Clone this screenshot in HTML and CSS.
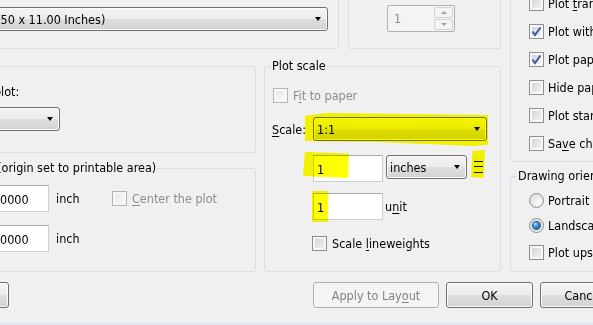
FILE: index.html
```html
<!DOCTYPE html>
<html lang="en">
<head>
    <meta charset="UTF-8">
    <title>Plot - Layout1</title>
    <link rel="stylesheet" href="styles.css">
</head>
<body>

<div class="dialog">
    <div class="main">
        <div class="row-top">
            <fieldset class="group paper">
                <legend>Paper size</legend>
                <div class="combo combo-paper"><span>ANSI A (8.50 x 11.00 Inches)</span><i class="arrow"></i></div>
            </fieldset>
            <fieldset class="group copies">
                <legend>Number of copies</legend>
                <div class="spin">
                    <span>1</span>
                    <div class="spin-btns"><b class="up"></b><b class="down"></b></div>
                </div>
            </fieldset>
        </div>

        <div class="row-mid">
            <div class="col-left">
                <fieldset class="group area">
                    <legend>Plot area</legend>
                    <div class="label">What to plot:</div>
                    <div class="combo combo-what"><span>Layout</span><i class="arrow"></i></div>
                </fieldset>
                <fieldset class="group offset">
                    <legend>Plot offset (origin set to printable area)</legend>
                    <div class="offset-row first">
                        <span class="axis">X:</span>
                        <div class="field offset-field">0.000000</div>
                        <span class="unit">inch</span>
                        <div class="check disabled"><span class="box"></span><span><u>C</u>enter the plot</span></div>
                    </div>
                    <div class="offset-row">
                        <span class="axis">Y:</span>
                        <div class="field offset-field">0.000000</div>
                        <span class="unit">inch</span>
                    </div>
                </fieldset>
            </div>

            <fieldset class="group scale">
                <legend>Plot scale</legend>
                <div class="check disabled fit"><span class="box"></span><span>F<u>i</u>t to paper</span></div>
                <div class="scale-row">
                    <span class="scale-label"><u>S</u>cale:</span>
                    <div class="combo combo-scale"><span>1:1</span><i class="arrow"></i></div>
                    <span class="mark mark-scale"></span>
                </div>
                <div class="units-row">
                    <div class="field scale-field">1</div>
                    <div class="combo combo-units"><span>inches</span><i class="arrow"></i></div>
                    <svg class="eq" width="9" height="12" viewBox="0 0 9 12">
                        <path d="M0 0.5H9M0 5.5H9M0 11.5H9" stroke="#1a1a1a" stroke-width="1"/>
                    </svg>
                    <span class="mark mark-one"></span>
                    <span class="mark mark-eq"></span>
                </div>
                <div class="units-row unit-row">
                    <div class="field scale-field">1</div>
                    <span class="unit-label">u<u>n</u>it</span>
                    <span class="mark mark-two"></span>
                </div>
                <div class="check lineweights"><span class="box"></span><span>Scale <u>l</u>ineweights</span></div>
            </fieldset>
        </div>
    </div>

    <div class="side">
        <fieldset class="group options">
            <legend>Plot options</legend>
            <div class="check opt first"><span class="box"></span><span>Plot <u>t</u>ransparency</span></div>
            <div class="check opt"><span class="box"><svg width="13" height="13" viewBox="0 0 13 13"><path d="M2.5 6.5 L5 10 L10.5 2.5" fill="none" stroke="#3f5aa0" stroke-width="2"/></svg></span><span>Plot with plot st<u>y</u>les</span></div>
            <div class="check opt"><span class="box"><svg width="13" height="13" viewBox="0 0 13 13"><path d="M2.5 6.5 L5 10 L10.5 2.5" fill="none" stroke="#3f5aa0" stroke-width="2"/></svg></span><span>Plot paperspace last</span></div>
            <div class="check opt"><span class="box"></span><span>Hide paperspace objects</span></div>
            <div class="check opt"><span class="box"></span><span>Plot stamp on</span></div>
            <div class="check opt"><span class="box"></span><span>Sa<u>v</u>e changes to layout</span></div>
        </fieldset>
        <fieldset class="group orient">
            <legend>Drawing orientation</legend>
            <div class="check portrait"><span class="radio"></span><span>Portrait</span></div>
            <div class="check landscape"><span class="radio on"></span><span>Landscape</span></div>
            <div class="check upside"><span class="box"></span><span>Plot upside-down</span></div>
        </fieldset>
    </div>
</div>

<div class="footer">
    <button class="btn btn-preview">Preview...</button>
    <button class="btn btn-apply" disabled>Apply to Lay<u>o</u>ut</button>
    <button class="btn btn-ok">OK</button>
    <button class="btn btn-cancel">Cancel</button>
</div>
<div class="frame-edge"></div>

</body>
</html>
```

FILE: styles.css
```css
body {
    margin: 0;
    width: 593px;
    height: 325px;
    overflow: hidden;
    background-color: #f0f0f0;
    font-family: "DejaVu Sans Condensed", "DejaVu Sans", sans-serif;
    font-stretch: condensed;
    font-size: 12.5px;
    color: #000;
}
u {
    text-decoration-thickness: 1px;
    text-underline-offset: 2px;
}
.dialog {
    display: flex;
    margin: -20px 0 0 -80px;
}
.main {
    width: 581px;
    flex: none;
    display: flex;
    flex-direction: column;
}
.side {
    width: 180px;
    flex: none;
    margin-left: 9px;
    display: flex;
    flex-direction: column;
}

/* group boxes */
.group {
    margin: 0;
    padding: 0 0 0 6px;
    border: 1px solid #d5dfe5;
    border-radius: 3px;
    box-sizing: border-box;
    min-width: 0;
}
.group legend {
    padding: 0 1px;
    line-height: 14px;
    white-space: nowrap;
}
.row-top {
    display: flex;
    gap: 9px;
}
.paper {
    width: 419px;
    height: 69px;
}
.copies {
    width: 153px;
    height: 69px;
}
.row-mid {
    display: flex;
    gap: 8px;
    margin-top: 10px;
}
.col-left {
    width: 336px;
    display: flex;
    flex-direction: column;
}
.area {
    height: 94px;
}
.offset {
    height: 111px;
    margin-top: 8px;
}
.offset legend {
    margin-left: 9px;
}
.scale {
    width: 237px;
    height: 213px;
}
.options {
    height: 182px;
}
.orient {
    height: 103px;
    margin-top: 7px;
}

/* combo boxes */
.combo {
    display: flex;
    align-items: center;
    justify-content: space-between;
    box-sizing: border-box;
    height: 24px;
    padding: 0 6px 0 3px;
    border: 1px solid #707070;
    border-radius: 3px;
    background: linear-gradient(#f3f3f3 0%, #ececec 48%, #dedede 52%, #d2d2d2 100%);
    box-shadow: inset 0 0 0 1px #fbfbfb;
    white-space: nowrap;
    flex: none;
}
.arrow {
    width: 0;
    height: 0;
    border-top: 4px solid #000;
    border-left: 3.5px solid transparent;
    border-right: 3.5px solid transparent;
}
.combo-paper {
    width: 388px;
    margin: 13px 0 0 13px;
}
.combo-what {
    width: 114px;
    margin: 8px 0 0 19px;
}
.combo-scale {
    width: 174px;
}
.combo-units {
    width: 81px;
    margin-left: 3px;
}

/* spinner */
.spin {
    display: flex;
    align-items: center;
    justify-content: space-between;
    box-sizing: border-box;
    width: 68px;
    height: 27px;
    margin: 11px 0 0 32px;
    padding: 0 0 0 6px;
    border: 1px solid #adb2b5;
    border-radius: 2px;
    background-color: #f4f4f4;
    color: #8d8d8d;
}
.spin-btns {
    display: flex;
    flex-direction: column;
    gap: 1px;
    width: 19px;
    height: 23px;
    margin-right: 1px;
}
.spin-btns b {
    flex: 1;
    display: flex;
    align-items: center;
    justify-content: center;
    border: 1px solid #cfd3d6;
    border-radius: 2px;
    background-color: #f4f4f4;
}
.spin-btns b::after {
    content: "";
    border-left: 3px solid transparent;
    border-right: 3px solid transparent;
}
.spin-btns .up::after {
    border-bottom: 3px solid #a2a2a2;
}
.spin-btns .down::after {
    border-top: 3px solid #a2a2a2;
}

/* text fields */
.field {
    box-sizing: border-box;
    height: 27px;
    padding: 6px 3px 0;
    border: 1px solid #c7d0da;
    border-top-color: #abadb3;
    background-color: #fff;
    white-space: nowrap;
    overflow: hidden;
    flex: none;
}
.label {
    line-height: 14px;
    margin: 12px 0 0 19px;
}

/* plot offset */
.offset-row {
    display: flex;
    align-items: center;
    margin: 13px 0 0 24px;
}
.offset-row.first {
    margin-top: 10px;
}
.axis {
    width: 20px;
}
.offset-field {
    width: 78px;
}
.unit {
    width: 63px;
    padding-left: 7px;
    box-sizing: border-box;
}

/* checkboxes and radios */
.check {
    display: flex;
    align-items: center;
    gap: 5px;
    line-height: 14px;
    white-space: nowrap;
}
.check.disabled {
    color: #8d8d8d;
}
.box {
    width: 15px;
    height: 15px;
    box-sizing: border-box;
    flex: none;
    border: 1px solid #8e8f8f;
    background: linear-gradient(135deg, #cdd0d4 0%, #f6f6f6 100%);
    box-shadow: inset 0 0 0 2px #f7f7f7;
}
.box svg {
    display: block;
}
.disabled .box {
    border-color: #b4b4b4;
    background: linear-gradient(135deg, #e6e6e6 0%, #fafafa 100%);
}
.radio {
    width: 15px;
    height: 15px;
    box-sizing: border-box;
    flex: none;
    display: flex;
    align-items: center;
    justify-content: center;
    border: 1px solid #8e8f8f;
    border-radius: 50%;
    background: radial-gradient(circle at 65% 65%, #fbfbfb 0%, #d3d5d8 100%);
}
.radio.on::after {
    content: "";
    width: 7px;
    height: 7px;
    border-radius: 50%;
    background: radial-gradient(circle at 35% 30%, #a8e2fb 0%, #2b86cc 45%, #0c3f78 100%);
    box-shadow: 0 0 0 1px #2a4f7d;
}

/* plot scale */
.fit {
    margin: 15px 0 0 2px;
}
.scale-row {
    position: relative;
    display: flex;
    align-items: center;
    margin: 14px 0 0 1px;
}
.scale-label {
    width: 41px;
}
.units-row {
    position: relative;
    display: flex;
    align-items: flex-start;
    margin: 14px 0 0 42px;
}
.scale-field {
    width: 70px;
}
.eq {
    margin: 6px 0 0 7px;
}
.unit-row {
    align-items: center;
    margin-top: 11px;
}
.unit-label {
    margin-left: 2px;
}
.lineweights {
    margin: 16px 0 0 41px;
}

/* highlighter marks */
.mark {
    position: absolute;
    background-color: #ffff00;
    mix-blend-mode: multiply;
}
.mark-scale {
    left: 33px;
    top: -4px;
    width: 183px;
    height: 33px;
    clip-path: polygon(0 8%, 12% 0, 100% 6%, 100% 96%, 92% 100%, 40% 88%, 0 85%);
}
.mark-one {
    left: -10px;
    top: -3px;
    width: 46px;
    height: 26px;
    clip-path: polygon(4% 0, 100% 6%, 98% 100%, 0 92%);
}
.mark-eq {
    left: 158px;
    top: -5px;
    width: 14px;
    height: 28px;
    clip-path: polygon(10% 4%, 100% 0, 90% 100%, 0 96%);
}
.mark-two {
    left: -1px;
    top: -2px;
    width: 16px;
    height: 31px;
}

/* side options */
.opt {
    margin: 13px 0 0 12px;
    gap: 4px;
    height: 15px;
}
.opt.first {
    margin-top: 2px;
}
.portrait,
.landscape,
.upside {
    margin-left: 12px;
    gap: 4px;
    height: 15px;
}
.portrait {
    margin-top: 10px;
}
.landscape {
    margin-top: 10px;
}
.upside {
    margin-top: 12px;
}

/* buttons */
.footer {
    display: flex;
    margin: 10px 0 0 -80px;
}
.btn {
    height: 26px;
    padding: 0;
    box-sizing: border-box;
    border: 1px solid #707070;
    border-radius: 3px;
    background: linear-gradient(#f3f3f3 0%, #ececec 48%, #dedede 52%, #d2d2d2 100%);
    box-shadow: inset 0 0 0 1px #fbfbfb;
    font-family: inherit;
    font-stretch: condensed;
    font-size: 12.5px;
    color: #000;
    flex: none;
}
.btn:disabled {
    border-color: #adb2b5;
    background: #f4f4f4;
    box-shadow: none;
    color: #838383;
}
.btn-preview {
    width: 89px;
}
.btn-apply {
    width: 126px;
    margin-left: 304px;
}
.btn-ok {
    width: 87px;
    margin-left: 7px;
}
.btn-cancel {
    width: 87px;
    margin-left: 7px;
}
.frame-edge {
    height: 10px;
    margin-top: 15px;
    background-color: #dce7f4;
}
```
